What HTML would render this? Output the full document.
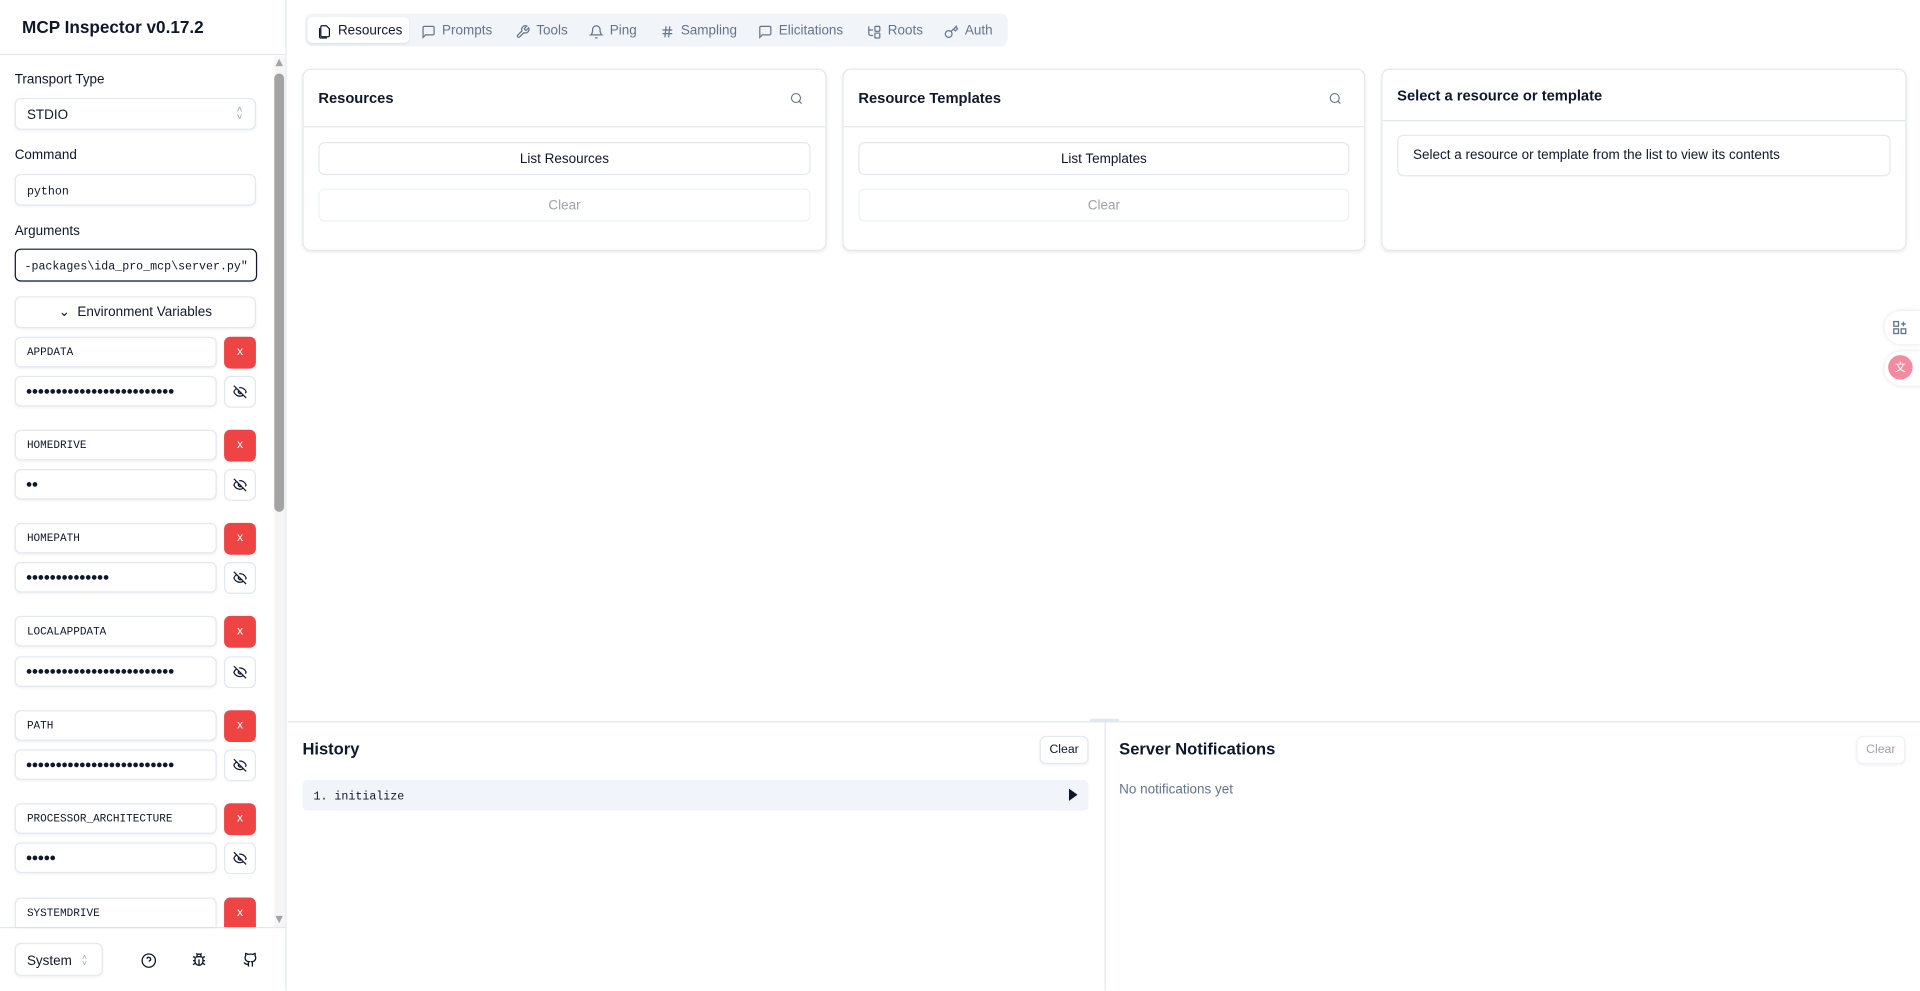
<!DOCTYPE html>
<html><head><meta charset="utf-8"><style>
*{box-sizing:border-box;margin:0;padding:0}
html,body{width:1920px;height:991px;overflow:hidden;background:#fff}
#w{position:absolute;left:0;top:0;width:1568px;height:809px;transform:scale(1.22449);transform-origin:0 0;font-family:"Liberation Sans",Arial,sans-serif;color:#0f172a;font-size:11px}
.a{position:absolute}
.box{position:absolute;border:1px solid #e2e8f0;border-radius:5px;background:#fff;box-shadow:0 1px 2px rgba(0,0,0,.05)}
.lbl{position:absolute;left:12px;font-size:11px}
.mono{font-family:"Liberation Mono",monospace;font-size:9.5px}
.red{position:absolute;left:183px;width:26px;height:26px;background:#ef4444;border-radius:5px;color:#fff;font-size:10px;text-align:center;line-height:26px}
.eye{position:absolute;left:183px;width:26px;height:26px;border:1px solid #e2e8f0;border-radius:5px;display:flex;align-items:center;justify-content:center}
.card{position:absolute;top:56px;height:149px;border:1px solid #e2e8f0;border-radius:7px;box-shadow:0 1px 3px rgba(0,0,0,.08)}
.ct{position:absolute;left:12px;font-weight:bold;font-size:12px}
.btn{position:absolute;left:12px;right:12px;height:27px;border:1px solid #e2e8f0;border-radius:5px;text-align:center;line-height:26px;font-size:11px}
.tab{position:absolute;top:15px;height:21px;line-height:21px;color:#64748b;font-size:11px;display:flex;align-items:center;gap:5px}
.tab svg{width:12px;height:12px}
.dots{position:absolute;left:8px;top:6px;font-size:9px;letter-spacing:-0.6px}
</style></head><body><div id="w">
<div class="a" style="left:0;top:0;width:234px;height:809px;border-right:1px solid #e2e8f0"></div>
<div class="a" style="left:18px;top:14px;font-weight:bold;font-size:14px">MCP Inspector v0.17.2</div>
<div class="a" style="left:0;top:44px;width:234px;height:1px;background:#e2e8f0"></div>
<div class="a" style="left:224px;top:46px;width:9px;height:711px;background:#f5f5f5"></div>
<div class="a" style="left:224px;top:60px;width:8px;height:358px;background:#a3a3a3;border-radius:4px"></div>
<div class="a" style="left:225px;top:48px;width:0;height:0;border-left:3.5px solid transparent;border-right:3.5px solid transparent;border-bottom:6px solid #a3a3a3"></div>
<div class="a" style="left:225px;top:748px;width:0;height:0;border-left:3.5px solid transparent;border-right:3.5px solid transparent;border-top:6px solid #a3a3a3"></div>

<div class="lbl" style="top:59px">Transport Type</div>
<div class="box" style="left:12px;top:80px;width:197px;height:26px"><span class="a" style="left:9px;top:7px">STDIO</span><span class="a" style="right:10px;top:6px;color:#94a3b8;font-size:8px;line-height:6px">˄<br>˅</span></div>
<div class="lbl" style="top:121px">Command</div>
<div class="box" style="left:12px;top:142px;width:197px;height:26px"><span class="a mono" style="left:9px;top:8px">python</span></div>
<div class="lbl" style="top:183px">Arguments</div>
<div class="box" style="left:12px;top:203px;width:198px;height:27px;border-color:#0f172a"><span class="a mono" style="left:7px;top:8px">-packages\ida_pro_mcp\server.py"</span></div>
<div class="box" style="left:12px;top:242px;width:197px;height:26px;text-align:center;line-height:24px">⌄&nbsp;&nbsp;Environment Variables</div>

<div class="a" style="left:0;top:757px;width:234px;height:1px;background:#e2e8f0"></div>
<div class="box" style="left:12px;top:770px;width:72px;height:27px"><span class="a" style="left:9px;top:8px">System</span><span class="a" style="left:54px;top:9px;color:#94a3b8;font-size:7px;line-height:5px">˄<br>˅</span></div>
<svg class="a" style="left:115px;top:778px" width="13" height="13" viewBox="0 0 24 24" fill="none" stroke="#0f172a" stroke-width="2"><circle cx="12" cy="12" r="10"/><path d="M9.1 9a3 3 0 0 1 5.8 1c0 2-3 3-3 3M12 17h.01"/></svg>
<svg class="a" style="left:156px;top:777px" width="13" height="14" viewBox="0 0 24 24" fill="none" stroke="#0f172a" stroke-width="2"><path d="M8 2l1.9 1.9M16 2l-1.9 1.9M9 7.1V6a3 3 0 1 1 6 0v1.1"/><path d="M12 20c-3.3 0-6-2.7-6-6v-3a4 4 0 0 1 4-4h4a4 4 0 0 1 4 4v3c0 3.3-2.7 6-6 6zM12 20v-9M6.5 13H3M21 13h-3.5M6 7.9L3 7M18 7.9L21 7M6 17l-3 2M18 17l3 2"/></svg>
<svg class="a" style="left:198px;top:777px" width="13" height="14" viewBox="0 0 24 24" fill="none" stroke="#0f172a" stroke-width="2"><path d="M15 22v-4a4.8 4.8 0 0 0-1-3.5c3 0 6-2 6-5.5.08-1.25-.27-2.48-1-3.5.28-1.150.28-2.35 0-3.5 0 0-1 0-3 1.5-2.64-.5-5.360-.5-8 0C6 2 5 2 5 2c-.3 1.15-.3 2.35 0 3.5A5.4 5.4 0 0 0 4 9c0 3.5 3 5.5 6 5.5-.39.49-.68 1.05-.85 1.65S8.93 17.38 9 18v4"/><path d="M9 18c-4.5 2-5-2-7-2"/></svg>

<div class="a" style="left:249px;top:11px;width:574px;height:27px;background:#f1f5f9;border-radius:6px"></div>
<div class="a" style="left:251px;top:14px;width:83px;height:21px;background:#fff;border-radius:4px;box-shadow:0 1px 2px rgba(0,0,0,.08)"></div>
<div class="tab" style="left:259px;color:#0f172a"><svg viewBox="0 0 24 24" fill="none" stroke="#0f172a" stroke-width="2"><path d="M15 2H8a2 2 0 0 0-2 2v14a2 2 0 0 0 2 2h10a2 2 0 0 0 2-2V7z"/><path d="M4 6v14a2 2 0 0 0 2 2h10"/></svg>Resources</div>
<div class="tab" style="left:344px"><svg viewBox="0 0 24 24" fill="none" stroke="#64748b" stroke-width="2"><path d="M21 15a2 2 0 0 1-2 2H7l-4 4V5a2 2 0 0 1 2-2h14a2 2 0 0 1 2 2z"/></svg>Prompts</div>
<div class="tab" style="left:421px"><svg viewBox="0 0 24 24" fill="none" stroke="#64748b" stroke-width="2"><path d="M14.7 6.3a1 1 0 0 0 0 1.4l1.6 1.6a1 1 0 0 0 1.4 0l3.8-3.8a6 6 0 0 1-7.9 7.9l-6.9 6.9a2.1 2.1 0 0 1-3-3l6.9-6.9a6 6 0 0 1 7.9-7.9z"/></svg>Tools</div>
<div class="tab" style="left:481px"><svg viewBox="0 0 24 24" fill="none" stroke="#64748b" stroke-width="2"><path d="M6 8a6 6 0 0 1 12 0c0 7 3 9 3 9H3s3-2 3-9M10.3 21a1.9 1.9 0 0 0 3.4 0"/></svg>Ping</div>
<div class="tab" style="left:539px"><svg viewBox="0 0 24 24" fill="none" stroke="#64748b" stroke-width="2"><path d="M4 9h16M4 15h16M10 3L8 21M16 3l-2 18"/></svg>Sampling</div>
<div class="tab" style="left:619px"><svg viewBox="0 0 24 24" fill="none" stroke="#64748b" stroke-width="2"><path d="M21 15a2 2 0 0 1-2 2H7l-4 4V5a2 2 0 0 1 2-2h14a2 2 0 0 1 2 2z"/></svg>Elicitations</div>
<div class="tab" style="left:708px"><svg viewBox="0 0 24 24" fill="none" stroke="#64748b" stroke-width="2"><path d="M3 3v12a3 3 0 0 0 3 3h4M3 9h7"/><rect x="13" y="3" width="8" height="8" rx="1"/><rect x="13" y="14" width="8" height="8" rx="1"/></svg>Roots</div>
<div class="tab" style="left:771px"><svg viewBox="0 0 24 24" fill="none" stroke="#64748b" stroke-width="2"><circle cx="7.5" cy="15.5" r="5.5"/><path d="M21 2l-9.6 9.6M15.5 7.5l3 3L22 7l-3-3"/></svg>Auth</div>

<div class="card" style="left:247px;width:428px">
 <div class="ct" style="top:16px">Resources</div>
 <svg class="a" style="right:18px;top:18px" width="11" height="11" viewBox="0 0 24 24" fill="none" stroke="#64748b" stroke-width="2"><circle cx="11" cy="11" r="8"/><path d="M21 21l-4.3-4.3"/></svg>
 <div class="a" style="left:0;right:0;top:46px;height:1px;background:#e2e8f0"></div>
 <div class="btn" style="top:59px">List Resources</div>
 <div class="btn" style="top:97px;color:#a1a1aa;border-color:#eef2f6">Clear</div>
</div>
<div class="card" style="left:688px;width:427px">
 <div class="ct" style="top:16px">Resource Templates</div>
 <svg class="a" style="right:18px;top:18px" width="11" height="11" viewBox="0 0 24 24" fill="none" stroke="#64748b" stroke-width="2"><circle cx="11" cy="11" r="8"/><path d="M21 21l-4.3-4.3"/></svg>
 <div class="a" style="left:0;right:0;top:46px;height:1px;background:#e2e8f0"></div>
 <div class="btn" style="top:59px">List Templates</div>
 <div class="btn" style="top:97px;color:#a1a1aa;border-color:#eef2f6">Clear</div>
</div>
<div class="card" style="left:1128px;width:429px">
 <div class="ct" style="top:14px">Select a resource or template</div>
 <div class="a" style="left:0;right:0;top:41px;height:1px;background:#e2e8f0"></div>
 <div class="btn" style="top:53px;height:34px;line-height:33px;text-align:left;padding-left:12px">Select a resource or template from the list to view its contents</div>
</div>

<div class="a" style="left:1539px;top:254px;width:30px;height:27px;border-radius:14px 0 0 14px;background:#fff;box-shadow:0 0 4px rgba(0,0,0,.12)"></div>
<svg class="a" style="left:1545px;top:261px" width="13" height="13" viewBox="0 0 24 24" fill="none" stroke="#64748b" stroke-width="2"><rect x="3" y="3" width="7" height="7"/><rect x="3" y="14" width="7" height="7"/><rect x="14" y="14" width="7" height="7"/><path d="M17.5 3v7M14 6.5h7"/></svg>
<div class="a" style="left:1539px;top:287px;width:30px;height:28px;border-radius:14px 0 0 14px;background:#fff;box-shadow:0 0 4px rgba(0,0,0,.12)"></div>
<div class="a" style="left:1542px;top:290px;width:20px;height:20px;border-radius:50%;background:#f28ba0;color:#fff;font-size:9px;text-align:center;line-height:20px;font-family:'Noto Sans CJK SC',sans-serif">文</div>

<div class="a" style="left:235px;top:589px;width:1333px;height:1px;background:#e2e8f0"></div>
<div class="a" style="left:890px;top:587px;width:24px;height:3px;background:#e2e8f0;border-radius:2px"></div>
<div class="a" style="left:902px;top:590px;width:1px;height:219px;background:#e2e8f0"></div>
<div class="a" style="left:247px;top:604px;font-weight:bold;font-size:13.5px">History</div>
<div class="box" style="left:849px;top:601px;width:40px;height:23px;text-align:center;line-height:21px;font-size:10px">Clear</div>
<div class="a" style="left:247px;top:637px;width:642px;height:25px;background:#f1f5f9;border-radius:4px"><span class="a mono" style="left:9px;top:8px">1. initialize</span><span class="a" style="right:9px;top:7px;width:0;height:0;border-top:5px solid transparent;border-bottom:5px solid transparent;border-left:7px solid #0f172a"></span></div>
<div class="a" style="left:914px;top:604px;font-weight:bold;font-size:13.5px">Server Notifications</div>
<div class="box" style="left:1516px;top:601px;width:40px;height:23px;text-align:center;line-height:21px;font-size:10px;color:#a1a1aa;border-color:#eef2f6">Clear</div>
<div class="a" style="left:914px;top:639px;color:#64748b;font-size:11px">No notifications yet</div>

<div class="box" style="left:12px;top:275px;width:165px;height:25px"><span class="a mono" style="left:9px;top:7px;font-size:9px">APPDATA</span></div><div class="red" style="top:275px">x</div>
<div class="box" style="left:12px;top:307px;width:165px;height:25px"><span class="dots">●●●●●●●●●●●●●●●●●●●●●●●●●</span></div><div class="eye" style="top:307px"><svg width="12" height="12" viewBox="0 0 24 24" fill="none" stroke="#0f172a" stroke-width="2"><path d="M10.7 5.1A10.7 10.7 0 0 1 22 12a11 11 0 0 1-1.4 2.4M14.1 14.2a3 3 0 0 1-4.2-4.2M17.5 17.5A10.7 10.7 0 0 1 2 12a11 11 0 0 1 4.4-5.5M2 2l20 20"/></svg></div>

<div class="box" style="left:12px;top:351px;width:165px;height:25px"><span class="a mono" style="left:9px;top:7px;font-size:9px">HOMEDRIVE</span></div><div class="red" style="top:351px">x</div>
<div class="box" style="left:12px;top:383px;width:165px;height:25px"><span class="dots">●●</span></div><div class="eye" style="top:383px"><svg width="12" height="12" viewBox="0 0 24 24" fill="none" stroke="#0f172a" stroke-width="2"><path d="M10.7 5.1A10.7 10.7 0 0 1 22 12a11 11 0 0 1-1.4 2.4M14.1 14.2a3 3 0 0 1-4.2-4.2M17.5 17.5A10.7 10.7 0 0 1 2 12a11 11 0 0 1 4.4-5.5M2 2l20 20"/></svg></div>

<div class="box" style="left:12px;top:427px;width:165px;height:25px"><span class="a mono" style="left:9px;top:7px;font-size:9px">HOMEPATH</span></div><div class="red" style="top:427px">x</div>
<div class="box" style="left:12px;top:459px;width:165px;height:25px"><span class="dots">●●●●●●●●●●●●●●</span></div><div class="eye" style="top:459px"><svg width="12" height="12" viewBox="0 0 24 24" fill="none" stroke="#0f172a" stroke-width="2"><path d="M10.7 5.1A10.7 10.7 0 0 1 22 12a11 11 0 0 1-1.4 2.4M14.1 14.2a3 3 0 0 1-4.2-4.2M17.5 17.5A10.7 10.7 0 0 1 2 12a11 11 0 0 1 4.4-5.5M2 2l20 20"/></svg></div>

<div class="box" style="left:12px;top:503px;width:165px;height:25px"><span class="a mono" style="left:9px;top:7px;font-size:9px">LOCALAPPDATA</span></div><div class="red" style="top:503px">x</div>
<div class="box" style="left:12px;top:536px;width:165px;height:25px"><span class="dots">●●●●●●●●●●●●●●●●●●●●●●●●●</span></div><div class="eye" style="top:536px"><svg width="12" height="12" viewBox="0 0 24 24" fill="none" stroke="#0f172a" stroke-width="2"><path d="M10.7 5.1A10.7 10.7 0 0 1 22 12a11 11 0 0 1-1.4 2.4M14.1 14.2a3 3 0 0 1-4.2-4.2M17.5 17.5A10.7 10.7 0 0 1 2 12a11 11 0 0 1 4.4-5.5M2 2l20 20"/></svg></div>

<div class="box" style="left:12px;top:580px;width:165px;height:25px"><span class="a mono" style="left:9px;top:7px;font-size:9px">PATH</span></div><div class="red" style="top:580px">x</div>
<div class="box" style="left:12px;top:612px;width:165px;height:25px"><span class="dots">●●●●●●●●●●●●●●●●●●●●●●●●●</span></div><div class="eye" style="top:612px"><svg width="12" height="12" viewBox="0 0 24 24" fill="none" stroke="#0f172a" stroke-width="2"><path d="M10.7 5.1A10.7 10.7 0 0 1 22 12a11 11 0 0 1-1.4 2.4M14.1 14.2a3 3 0 0 1-4.2-4.2M17.5 17.5A10.7 10.7 0 0 1 2 12a11 11 0 0 1 4.4-5.5M2 2l20 20"/></svg></div>

<div class="box" style="left:12px;top:656px;width:165px;height:25px"><span class="a mono" style="left:9px;top:7px;font-size:9px">PROCESSOR_ARCHITECTURE</span></div><div class="red" style="top:656px">x</div>
<div class="box" style="left:12px;top:688px;width:165px;height:25px"><span class="dots">●●●●●</span></div><div class="eye" style="top:688px"><svg width="12" height="12" viewBox="0 0 24 24" fill="none" stroke="#0f172a" stroke-width="2"><path d="M10.7 5.1A10.7 10.7 0 0 1 22 12a11 11 0 0 1-1.4 2.4M14.1 14.2a3 3 0 0 1-4.2-4.2M17.5 17.5A10.7 10.7 0 0 1 2 12a11 11 0 0 1 4.4-5.5M2 2l20 20"/></svg></div>

<div class="box" style="left:12px;top:733px;width:165px;height:24px;border-bottom:none;border-radius:5px 5px 0 0"><span class="a mono" style="left:9px;top:7px;font-size:9px">SYSTEMDRIVE</span></div><div class="red" style="top:733px;height:24px;border-radius:5px 5px 0 0">x</div>
</div></body></html>
